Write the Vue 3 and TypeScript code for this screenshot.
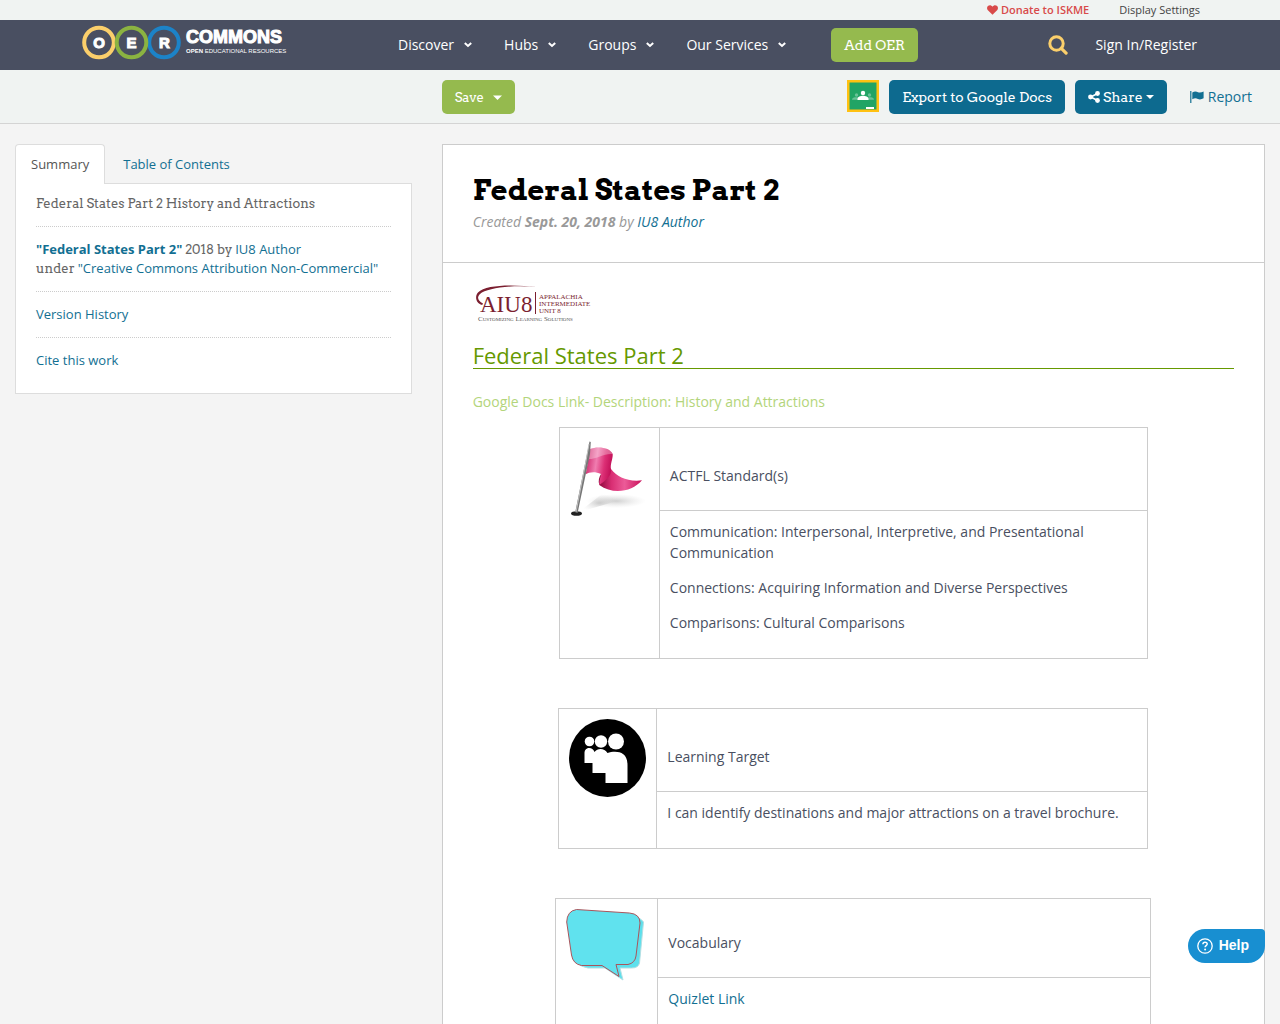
<script setup lang="ts">
interface MenuItem {
  label: string
}

const menu: MenuItem[] = [
  { label: 'Discover' },
  { label: 'Hubs' },
  { label: 'Groups' },
  { label: 'Our Services' },
]
</script>

<template>
  <div class="page">
    <div class="topbar">
      <a class="donate" href="#">
        <svg width="11" height="10" viewBox="0 0 11 10" aria-hidden="true">
          <path d="M5.5 9.800L.9 5.300C-.4 3.900-.2 1.700 1.200.7 2.700-.3 4.500.2 5.500 1.700 6.500.2 8.300-.3 9.800.7c1.400 1 1.600 3.200.3 4.600z" fill="#d84a4a" />
        </svg>
        Donate to ISKME
      </a>
      <a class="display" href="#">Display Settings</a>
    </div>

    <header class="navbar">
      <a class="logo" href="#" aria-label="OER Commons home">
        <svg width="208" height="36" viewBox="0 0 208 36">
          <g fill="none" stroke-width="4">
            <circle cx="17" cy="17.500" r="14.800" stroke="#fbcf6b" />
            <circle cx="82" cy="17.500" r="14.800" stroke="#1c83c8" />
            <circle cx="49.500" cy="17.500" r="14.800" stroke="#8bb341" />
          </g>
          <g class="logo-letters" text-anchor="middle">
            <text x="17" y="23">O</text>
            <text x="49.500" y="23">E</text>
            <text x="82.500" y="23">R</text>
          </g>
          <text class="logo-name" x="104" y="18">COMMONS</text>
          <text class="logo-tag" x="104" y="28"><tspan class="logo-open">OPEN</tspan> EDUCATIONAL RESOURCES</text>
        </svg>
      </a>
      <nav class="menu">
        <a v-for="item in menu" :key="item.label" href="#">
          {{ item.label }}
          <svg width="8" height="8" viewBox="0 0 8 8" aria-hidden="true">
            <path d="M.8 3l3.200 3 3.200-3" fill="none" stroke="#fff" stroke-width="2" />
          </svg>
        </a>
      </nav>
      <button class="btn green add" type="button">Add OER</button>
      <div class="account">
        <button class="search" type="button" aria-label="Search">
          <svg width="20" height="20" viewBox="0 0 20 20">
            <circle cx="8.500" cy="8.500" r="6.700" fill="none" stroke="#fbcf6b" stroke-width="3" />
            <path d="M13.300 13.300l4.800 4.800" stroke="#fbcf6b" stroke-width="3.200" stroke-linecap="round" />
          </svg>
        </button>
        <a href="#">Sign In/Register</a>
      </div>
    </header>

    <div class="actions">
      <div class="save-slot">
        <button class="btn green save" type="button">
          Save
          <svg width="9" height="5" viewBox="0 0 9 5" aria-hidden="true"><path d="M0 .5h9L4.500 5z" fill="#fff" /></svg>
        </button>
      </div>
      <div class="tools">
        <button class="classroom" type="button" aria-label="Share to Google Classroom">
          <svg width="32" height="32" viewBox="0 0 32 32">
            <path fill="#ffc112" d="M0 0h32v32H0z" />
            <path fill="#21a465" d="M2.500 2.500h27v27h-27z" />
            <g fill="#69c297">
              <circle cx="9.500" cy="15" r="1.700" />
              <circle cx="22.500" cy="15" r="1.700" />
              <path d="M5 19.800c0-2 2-2.600 4.500-2.600s4 .8 4 2.600zM18.500 19.800c0-1.800 1.500-2.600 4-2.600s4.500.6 4.500 2.600z" />
            </g>
            <circle cx="16" cy="13" r="2.200" fill="#fff" />
            <path d="M10.500 20v-1c0-2 3-3.200 5.500-3.200s5.500 1.200 5.500 3.200v1z" fill="#fff" />
            <path d="M19 27h8v2h-8z" fill="#fff" />
          </svg>
        </button>
        <button class="btn blue" type="button">Export to Google Docs</button>
        <button class="btn blue" type="button">
          <svg width="12" height="12" viewBox="0 0 12 12" aria-hidden="true">
            <path d="M9.500 2.500L2.800 6l6.700 3.500" fill="none" stroke="#fff" stroke-width="1.600" />
            <circle cx="9.500" cy="2.500" r="2.400" fill="#fff" />
            <circle cx="2.500" cy="6" r="2.400" fill="#fff" />
            <circle cx="9.500" cy="9.500" r="2.400" fill="#fff" />
          </svg>
          Share
          <svg width="8" height="4" viewBox="0 0 8 4" aria-hidden="true"><path d="M0 0h8L4 4z" fill="#fff" /></svg>
        </button>
        <a class="report" href="#">
          <svg width="14" height="12" viewBox="0 0 14 12" aria-hidden="true">
            <path d="M.8 0v12" stroke="#126f92" stroke-width="1.200" />
            <path d="M2.300 1.400C4.800-.1 6.600.5 8 1.200c1.500.7 3.500.4 5.600-.7v6.800c-2 1.200-4 1.500-5.700.7C6.300 7.200 4.600 7 2.300 8.300z" fill="#126f92" />
          </svg>
          Report
        </a>
      </div>
    </div>

    <div class="columns">
      <aside class="sidebar">
        <div class="tabs">
          <a class="tab active" href="#">Summary</a>
          <a class="tab" href="#">Table of Contents</a>
        </div>
        <ul class="panel">
          <li>Federal States Part 2 History and Attractions</li>
          <li>
            <a href="#"><b>"Federal States Part 2"</b></a> 2018 by <a href="#">IU8 Author</a><br />
            under <a href="#">"Creative Commons Attribution Non-Commercial"</a>
          </li>
          <li><a href="#">Version History</a></li>
          <li><a href="#">Cite this work</a></li>
        </ul>
      </aside>

      <main class="article">
        <div class="article-head">
          <h1>Federal States Part 2</h1>
          <p class="meta">Created <b>Sept. 20, 2018</b> by <a href="#">IU8 Author</a></p>
        </div>
        <div class="article-body">
          <svg class="unit-logo" width="120" height="41" viewBox="0 0 120 41" role="img" aria-label="Appalachia Intermediate Unit 8">
            <path d="M65 4.200C40 1.500 14 5 7 11c-3.500 3.500-2 7 3 9.500l-.8 1.500C2 20 2 12.500 5 9.500 13 1 42 1.500 65 4.200z" fill="#7b1f30" />
            <text class="unit-big" x="7" y="29">AIU8</text>
            <path d="M62.500 9v22" stroke="#7b1f30" stroke-width="1" />
            <g class="unit-small">
              <text x="66" y="16">APPALACHIA</text>
              <text x="66" y="23">INTERMEDIATE</text>
              <text x="66" y="30">UNIT 8</text>
            </g>
            <text class="unit-tag" x="5" y="38">Customizing Learning Solutions</text>
          </svg>

          <h2>Federal States Part 2</h2>
          <p class="intro">Google Docs Link- Description: History and Attractions</p>

          <table class="standards">
            <tbody>
              <tr>
                <td class="icon" rowspan="2">
                  <svg width="79" height="80" viewBox="0 0 79 80" role="img" aria-label="Flag">
                    <defs>
                      <linearGradient id="cloth" x1="0" y1="0" x2="1" y2=".2">
                        <stop offset="0" stop-color="#c8175e" />
                        <stop offset=".45" stop-color="#f07db0" />
                        <stop offset=".75" stop-color="#dc2f75" />
                        <stop offset="1" stop-color="#c4125a" />
                      </linearGradient>
                      <linearGradient id="tail" x1="0" y1="0" x2="1" y2="0">
                        <stop offset="0" stop-color="#8d083b" />
                        <stop offset=".3" stop-color="#d92f74" />
                        <stop offset=".6" stop-color="#ec5b98" />
                        <stop offset="1" stop-color="#c9105a" />
                      </linearGradient>
                      <radialGradient id="shade">
                        <stop offset="0" stop-color="#bbb" stop-opacity=".7" />
                        <stop offset="1" stop-color="#ddd" stop-opacity="0" />
                      </radialGradient>
                    </defs>
                    <ellipse cx="46" cy="63" rx="30" ry="7" fill="url(#shade)" />
                    <path d="M9 74L32 56l18 2-6 6z" fill="url(#shade)" />
                    <path d="M29.300 47C28 43 29 39 31 36 36 38 40 36 41 31 47 39 58 44 72 42.300 62 54 43 57 29.300 47z" fill="url(#tail)" />
                    <path d="M20 11C27 8 40 9 42.700 16 43 21 40 26 41 31 42 38 36 42 29.300 47 29 42 31 39 31 36 25 33 19 34 15.700 36.300z" fill="url(#cloth)" />
                    <path d="M20 11C27 8 40 9 42.700 16 34 15 28 21 18 21z" fill="#fff" opacity=".3" />
                    <ellipse cx="6.500" cy="75.500" rx="5.500" ry="2.300" fill="#222" />
                    <path d="M19.500 3.500l1.300.5L20 16 7.600 75l-2.400-.7L16 21z" fill="#777" />
                    <path d="M19 6l-3 17L6 74" fill="none" stroke="#c4c4c4" stroke-width="1" />
                  </svg>
                </td>
                <td class="topic tall"><p>ACTFL Standard(s)</p></td>
              </tr>
              <tr>
                <td>
                  <p>Communication: Interpersonal, Interpretive, and Presentational Communication</p>
                  <p>Connections: Acquiring Information and Diverse Perspectives</p>
                  <p>Comparisons: Cultural Comparisons</p>
                </td>
              </tr>
            </tbody>
          </table>

          <table class="target">
            <tbody>
              <tr>
                <td class="icon" rowspan="2">
                  <svg width="77" height="78" viewBox="0 0 77 78" role="img" aria-label="Group of people">
                    <ellipse cx="38.500" cy="39" rx="38.500" ry="39" />
                    <g fill="#fff">
                      <circle cx="20.500" cy="22.500" r="4.800" />
                      <circle cx="32" cy="22.500" r="6.200" />
                      <circle cx="47" cy="22.500" r="8" />
                      <path d="M15.500 44V34c0-6 8-7 10-1 3-4 10-4 13 1 7-2 20-3 20 12v18H36.500V54h-13V44z" />
                    </g>
                  </svg>
                </td>
                <td class="topic tall"><p>Learning Target</p></td>
              </tr>
              <tr>
                <td><p>I can identify destinations and major attractions on a travel brochure.</p></td>
              </tr>
            </tbody>
          </table>

          <table class="vocabulary">
            <tbody>
              <tr>
                <td class="icon" rowspan="2">
                  <svg width="80" height="74" viewBox="0 0 80 74" role="img" aria-label="Speech bubble">
                    <path d="M12 3L66 7q8 1 11.500 6l-4 41q-1 5-8 5H54l3 12L39 59H22q-7-1-10-5z" fill="#5de0ec" stroke="#b4dfe3" stroke-width="1" />
                    <path d="M10.500.5L63.500 4Q74 5 74 14L70 47q-1 7-8 8.500H50l3 12L36 56.500H15.500Q7 55 5.500 46L.7 13Q1 2 10.500.5z" fill="#60e2ee" stroke="#aa555c" stroke-width="1" />
                  </svg>
                </td>
                <td class="topic"><p>Vocabulary</p></td>
              </tr>
              <tr>
                <td><p><a href="#">Quizlet Link</a></p></td>
              </tr>
            </tbody>
          </table>
        </div>
      </main>
    </div>

    <button class="help" type="button">
      <svg width="16" height="16" viewBox="0 0 16 16" aria-hidden="true">
        <circle cx="8" cy="8" r="7.200" fill="none" stroke="#fff" stroke-width="1.300" />
        <path d="M5.900 6.300c0-2.800 4.300-2.800 4.300-.2 0 1.500-2.100 1.700-2.100 3.200" fill="none" stroke="#fff" stroke-width="1.500" />
        <circle cx="8.100" cy="11.500" r="1" fill="#fff" />
      </svg>
      <span>Help</span>
    </button>
  </div>
</template>

<style>
body {
  margin: 0;
  background: #f4f4f4;
}
</style>

<style scoped>
* {
  box-sizing: border-box;
}
.page {
  display: flex;
  flex-direction: column;
  min-height: 100vh;
  font: 14px/21px "Open Sans", sans-serif;
  color: #494f61;
}
a {
  color: #126f92;
  text-decoration: none;
}
button {
  border: 0;
  padding: 0;
  background: none;
  cursor: pointer;
}
svg {
  display: block;
}
.topbar {
  display: flex;
  justify-content: flex-end;
  gap: 30px;
  padding-right: 80px;
  background: #f0f3f2;
  font-size: 11px;
  line-height: 20px;
}
.donate {
  display: flex;
  align-items: center;
  gap: 3px;
  color: #d84a4a;
  font-weight: 600;
}
.display {
  color: #444;
}
.navbar {
  display: flex;
  align-items: center;
  height: 50px;
  padding: 0 83px 0 82px;
  background: #494f61;
}
.navbar a {
  color: #fff;
}
.logo {
  margin: 0 108px 4px 0;
}
.logo-letters {
  font: bold 15px "Liberation Sans", Arial, sans-serif;
  fill: #fff;
  stroke: #fff;
  stroke-width: 1px;
}
.logo-name {
  font: bold 18px "Liberation Sans", Arial, sans-serif;
  fill: #fff;
  stroke: #fff;
  stroke-width: 1px;
}
.logo-tag {
  font: 6px "Liberation Sans", Arial, sans-serif;
  fill: #fff;
}
.logo-open {
  font-weight: bold;
}
.menu {
  display: flex;
  gap: 32px;
}
.menu a {
  display: flex;
  align-items: center;
  gap: 10px;
}
.menu,
.account a {
  padding-bottom: 2px;
}
.btn {
  display: flex;
  align-items: center;
  gap: 3px;
  height: 34px;
  padding: 0 13px;
  border-radius: 5px;
  color: #fff;
  font: 14px/20px Arvo, "DejaVu Serif", serif;
}
.green {
  background: #95ba4e;
}
.blue {
  background: #0d6a8f;
}
.add {
  margin-left: 45px;
}
.save {
  gap: 9px;
  padding-top: 2px;
  font-size: 13px;
}
.account {
  display: flex;
  align-items: center;
  gap: 27px;
  margin-left: auto;
}
.actions {
  display: grid;
  grid-template-columns: 1fr 2fr;
  align-items: center;
  height: 54px;
  background: #f0f3f2;
  border-bottom: 1px solid #d4d4d4;
}
.save-slot {
  grid-area: 1 / 2;
  margin-left: 15px;
}
.tools {
  display: flex;
  grid-area: 1 / 2;
  align-items: center;
  justify-self: end;
  gap: 10px;
  margin-right: 28px;
}
.classroom {
  margin-bottom: 2px;
}
.report {
  display: flex;
  align-items: center;
  gap: 4px;
  margin-left: 13px;
}
.columns {
  display: grid;
  grid-template-columns: 1fr 2fr;
  flex: 1;
  padding-top: 20px;
}
.sidebar {
  margin: 0 15px;
  font-size: 13px;
  line-height: 19px;
}
.tabs {
  display: flex;
  gap: 2px;
}
.tab {
  padding: 10px 15px 9px;
  border: 1px solid transparent;
  border-bottom: 0;
}
.tab.active {
  position: relative;
  margin-bottom: -1px;
  padding-bottom: 10px;
  border-color: #ddd;
  border-radius: 4px 4px 0 0;
  background: #fff;
  color: #555;
}
.panel {
  margin: 0;
  padding: 10px 20px;
  border: 1px solid #ddd;
  background: #fff;
  list-style: none;
  color: #666;
  font-family: Arvo, "DejaVu Serif", serif;
}
.panel a {
  font-family: "Open Sans", sans-serif;
}
.panel li {
  padding-bottom: 13px;
}
.panel li + li {
  padding-top: 13px;
  border-top: 1px dotted #ccc;
}
.article {
  margin: 0 15px;
  border: 1px solid #ccc;
  background: #fff;
}
.article-head {
  padding: 30px;
  border-bottom: 1px solid #ccc;
}
h1 {
  margin: 0 0 6px;
  color: #000;
  font: bold 29px/30px Arvo, "DejaVu Serif", serif;
}
.meta {
  margin: 0;
  color: #999;
  font-style: italic;
}
.article-body {
  padding: 20px 30px 40px;
}
.unit-big {
  font: 23px "Liberation Serif", serif;
  fill: #7b1f30;
}
.unit-small {
  font: 7px "Liberation Serif", serif;
  fill: #7b1f30;
}
.unit-tag {
  font: small-caps 7px "Liberation Serif", serif;
  fill: #555;
}
h2 {
  margin: 19px 0 22px;
  border-bottom: 1px solid #690;
  color: #690;
  font-size: 22px;
  font-weight: 400;
  line-height: 25px;
}
.intro {
  margin: 0 0 15px;
  color: #b3d57b;
}
table {
  margin: 0 auto 49px;
  border-collapse: collapse;
}
td {
  padding: 10px 10px 11px;
  border: 1px solid #ccc;
  vertical-align: top;
}
td p {
  margin: 0 0 14px;
}
.topic {
  height: 79px;
  padding-bottom: 10px;
  vertical-align: bottom;
}
.tall {
  height: 83px;
}
.standards {
  width: 589px;
}
.target {
  width: 590px;
}
.vocabulary {
  width: 596px;
}
.icon {
  width: 100px;
}
.target .icon {
  width: 98px;
}
.vocabulary .icon {
  width: 102px;
}
.help {
  position: fixed;
  right: 15px;
  bottom: 61px;
  display: flex;
  align-items: center;
  gap: 6px;
  height: 34px;
  padding: 0 16px 0 9px;
  border-radius: 17px 4px 17px 17px;
  background: #188fd1;
  color: #fff;
  font: bold 14px/20px "Liberation Sans", Arial, sans-serif;
}
.help span {
  padding-bottom: 2px;
}
</style>
